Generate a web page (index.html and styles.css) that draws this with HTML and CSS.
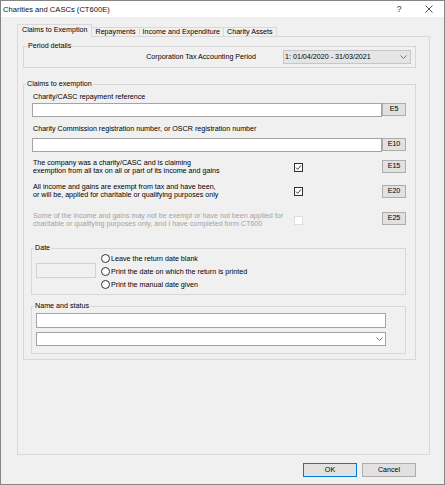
FILE: index.html
```html
<!DOCTYPE html>
<html lang="en">
<head>
<meta charset="utf-8">
<title>Charities and CASCs (CT600E)</title>
<link rel="stylesheet" href="styles.css">
</head>
<body>
<div class="window">
  <div class="titlebar">
    <span class="title">Charities and CASCs (CT600E)</span>
    <span class="help">?</span>
    <span class="close"><svg width="8" height="8" viewBox="0 0 8 8"><path d="M0.5 0.5L7.5 7.5M7.5 0.5L0.5 7.5" stroke="#222" stroke-width="0.8" fill="none"/></svg></span>
  </div>
  <div class="client">
    <div class="tabs">
      <div class="tab active">Claims to Exemption</div>
      <div class="tab">Repayments</div>
      <div class="tab">Income and Expenditure</div>
      <div class="tab">Charity Assets</div>
    </div>
    <div class="panel">
      <fieldset class="group period">
        <legend class="legend">Period details</legend>
        <div class="period-row">
          <span class="period-label">Corporation Tax Accounting Period</span>
          <div class="combo readonly">
            <span>1: 01/04/2020 - 31/03/2021</span>
            <svg class="chev" width="7" height="4" viewBox="0 0 7 4"><path d="M0.5 0.5L3.5 3.5L6.5 0.5" stroke="#666" stroke-width="0.9" fill="none"/></svg>
          </div>
        </div>
      </fieldset>

      <fieldset class="group claims">
        <legend class="legend">Claims to exemption</legend>
        <div class="claims-body">
          <div class="field-label l1">Charity/CASC repayment reference</div>
          <div class="entry-row r1"><div class="textbox"></div><div class="box-btn">E5</div></div>
          <div class="field-label l2">Charity Commission registration number, or OSCR registration number</div>
          <div class="entry-row r2"><div class="textbox"></div><div class="box-btn">E10</div></div>

          <div class="check-row c1">
            <div class="check-text">The company was a charity/CASC and is claiming<br>exemption from all tax on all or part of its income and gains</div>
            <span class="checkbox"><svg width="7" height="7" viewBox="0 0 7 7"><path d="M1 3.6L2.7 5.3L6 1.5" fill="none" stroke="#222" stroke-width="0.9"/></svg></span>
            <div class="box-btn">E15</div>
          </div>
          <div class="check-row c2">
            <div class="check-text">All income and gains are exempt from tax and have been,<br>or will be, applied for charitable or qualifying purposes only</div>
            <span class="checkbox"><svg width="7" height="7" viewBox="0 0 7 7"><path d="M1 3.6L2.7 5.3L6 1.5" fill="none" stroke="#222" stroke-width="0.9"/></svg></span>
            <div class="box-btn">E20</div>
          </div>
          <div class="check-row c3 disabled">
            <div class="check-text">Some of the income and gains may not be exempt or have not been applied for<br>charitable or qualifying purposes only, and I have completed form CT600</div>
            <span class="checkbox"></span>
            <div class="box-btn">E25</div>
          </div>

          <fieldset class="group sub date">
            <legend class="legend">Date</legend>
            <div class="date-body">
              <div class="date-box"></div>
              <div class="radios">
                <div class="radio"><span class="radio-dot"></span>Leave the return date blank</div>
                <div class="radio"><span class="radio-dot"></span>Print the date on which the return is printed</div>
                <div class="radio"><span class="radio-dot"></span>Print the manual date given</div>
              </div>
            </div>
          </fieldset>

          <fieldset class="group sub name">
            <legend class="legend">Name and status</legend>
            <div class="name-body">
              <div class="textbox name-input"></div>
              <div class="combo name-combo">
                <svg class="chev" width="7" height="4" viewBox="0 0 7 4"><path d="M0.5 0.5L3.5 3.5L6.5 0.5" stroke="#666" stroke-width="0.9" fill="none"/></svg>
              </div>
            </div>
          </fieldset>
        </div>
      </fieldset>
    </div>
    <div class="buttons">
      <div class="btn default">OK</div>
      <div class="btn">Cancel</div>
    </div>
  </div>
</div>
</body>
</html>
```
FILE: styles.css
```css
* { box-sizing: border-box; }
html, body { margin: 0; padding: 0; }
body {
  width: 445px;
  height: 485px;
  overflow: hidden;
  background: #f0f0f0;
  font-family: "Liberation Sans", Arial, sans-serif;
  font-size: 7.15px;
  color: #000;
}
.window {
  width: 445px;
  height: 485px;
  border: 1px solid #858585;
  background: #f0f0f0;
  display: flex;
  flex-direction: column;
}
.titlebar {
  height: 16px;
  flex-shrink: 0;
  background: #fff;
  display: flex;
  align-items: center;
}
.title {
  flex: 1;
  margin-left: 2px;
  font-size: 7.6px;
  color: #111;
}
.help {
  width: 6px;
  text-align: center;
  font-size: 8.5px;
  color: #333;
}
.close {
  display: flex;
  width: 8px;
  height: 8px;
  margin-left: 23px;
  margin-right: 11px;
}
.client {
  flex: 1;
  display: flex;
  flex-direction: column;
  padding: 7px 0 0 16px;
}
.tabs {
  display: flex;
  align-items: flex-end;
  height: 12px;
}
.tab {
  height: 9px;
  line-height: 9px;
  padding: 0 3px;
  margin-left: -1px;
  border: 1px solid #d9d9d9;
  border-bottom: none;
  background: #f0f0f0;
  white-space: nowrap;
}
.tab.active {
  height: 13px;
  line-height: 11px;
  margin-left: 0;
  margin-bottom: -1px;
  padding: 0 4px;
  position: relative;
  z-index: 1;
}
.panel {
  width: 413px;
  height: 419px;
  border: 1px solid #d9d9d9;
  background: #f0f0f0;
  padding: 5px 0 0 5px;
}
.group {
  margin: 0;
  padding: 0;
  min-width: 0;
  border: 1px solid #d7d7d7;
}
.legend {
  padding: 0 1px;
  margin-left: 3px;
  line-height: 8px;
}
.period {
  width: 393px;
  padding: 0 4px 3px 0;
}
.period-row {
  display: flex;
  justify-content: flex-end;
  align-items: center;
  height: 14px;
}
.period-label {
  margin-right: 27px;
}
.combo {
  height: 14px;
  display: flex;
  align-items: center;
  justify-content: space-between;
  border: 1px solid #c6c6c6;
  background: #e5e5e5;
  padding: 0 3px 0 1px;
  white-space: nowrap;
}
.period .combo {
  width: 128px;
}
.chev { display: block; }
.claims {
  width: 393px;
  margin-top: 12px;
}
.claims > .legend { margin-left: 2px; }
.claims-body {
  padding: 0 0 5px 8px;
}
.field-label {
  margin-left: 1px;
  height: 10px;
  line-height: 10px;
  white-space: nowrap;
}
.l1 { margin-top: 4px; }
.l2 { margin-top: 7px; }
.entry-row {
  display: flex;
  align-items: flex-start;
}
.r1 { margin-top: 1px; }
.r2 { margin-top: 4px; }
.textbox {
  height: 14px;
  width: 350px;
  border: 1px solid #a4a4a4;
  background: #fff;
}
.box-btn {
  width: 24px;
  height: 13px;
  border: 1px solid #adadad;
  background: #e1e1e1;
  text-align: center;
  line-height: 11px;
}
.check-row {
  display: flex;
  align-items: flex-start;
  margin-left: 1px;
}
.c1 { margin-top: 8px; }
.c2 { margin-top: 9px; }
.c3 { margin-top: 14px; }
.check-text {
  width: 261px;
  line-height: 7.5px;
  white-space: nowrap;
}
.checkbox {
  align-self: center;
  width: 9px;
  height: 9px;
  border: 1px solid #333;
  background: #fff;
  margin-right: 79px;
  display: flex;
  align-items: center;
  justify-content: center;
}
.c2 .box-btn { margin-top: 1px; }
.c3 .box-btn { margin-top: -1px; }
.disabled .check-text { color: #a3a3a3; }
.disabled .checkbox { border-color: #dedede; }
.sub {
  width: 375px;
  margin-left: -1px;
}
.sub > .legend { margin-left: 2px; }
.date { margin-top: 16px; }
.date-body {
  display: flex;
  align-items: flex-start;
  padding: 0 0 3px 4px;
}
.date-box {
  width: 60px;
  height: 15px;
  margin-top: 11px;
  border: 1px solid #d2d2d2;
  background: #f0f0f0;
}
.radios {
  margin-left: 5px;
}
.radio {
  display: flex;
  align-items: center;
  height: 13px;
  white-space: nowrap;
}
.radio-dot {
  width: 9px;
  height: 9px;
  border: 1px solid #333;
  border-radius: 50%;
  background: #fff;
  margin-right: 1px;
}
.name { margin-top: 7px; }
.name-body {
  padding: 3px 0 7px 4px;
}
.name-input {
  height: 15px;
}
.name-combo {
  width: 350px;
  margin-top: 4px;
  background: #fff;
  border-color: #a4a4a4;
  justify-content: flex-end;
  padding-right: 2px;
}
.buttons {
  display: flex;
  justify-content: flex-end;
  margin-top: 8px;
  padding-right: 28px;
}
.btn {
  width: 54px;
  height: 14px;
  line-height: 12px;
  text-align: center;
  border: 1px solid #adadad;
  background: #e1e1e1;
}
.btn + .btn { margin-left: 5px; }
.btn.default { border-color: #0078d7; }
```
